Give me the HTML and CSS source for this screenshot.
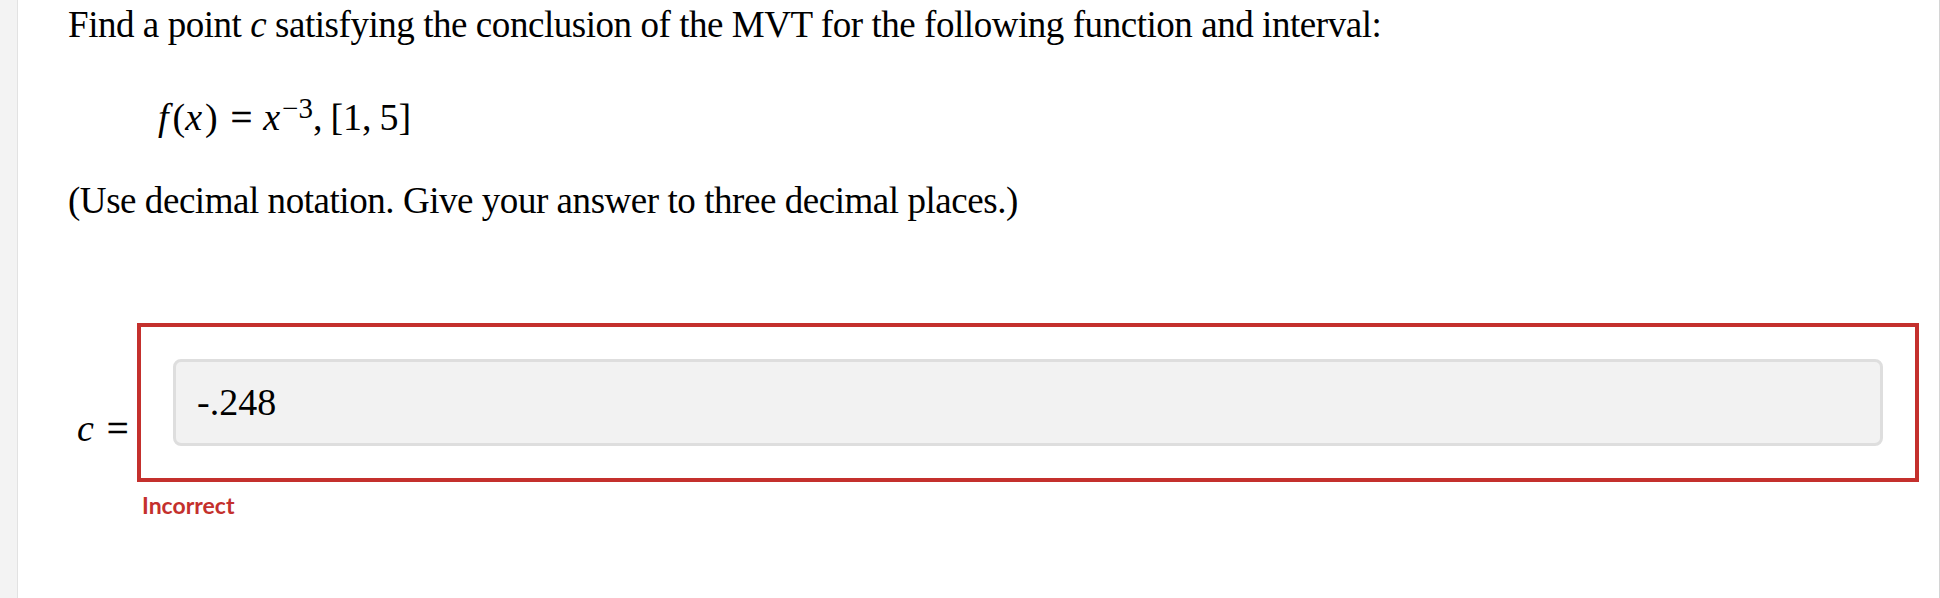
FILE: index.html
```html
<!DOCTYPE html>
<html lang="en">
<head>
<meta charset="utf-8">
<title>MVT question</title>
<link rel="stylesheet" href="styles.css">
</head>
<body>
<div class="page">
  <aside class="rail"></aside>
  <main class="content">
    <p class="prompt prose">Find a point <i class="mi">c</i> satisfying the conclusion of the MVT for the following function and interval:</p>
    <p class="math"><i class="mi mi-f">f</i>(<i class="mi mi-x">x</i>)<span class="mo">=</span><i class="mi">x</i><sup class="sup">−3</sup><span class="punct">,</span>[1<span class="punct">,</span>5]</p>
    <p class="note prose">(Use decimal notation. Give your answer to three decimal places.)</p>
    <div class="answer">
      <div class="label"><i class="mi">c</i><span class="mo mo-end">=</span></div>
      <div class="field">
        <div class="box">
          <div class="control">-.248</div>
        </div>
        <div class="feedback">Incorrect</div>
      </div>
    </div>
  </main>
</div>
</body>
</html>
```
FILE: styles.css
```css
html, body {
  margin: 0;
  padding: 0;
  background: #ffffff;
}

body {
  font-family: "Liberation Serif", "Times New Roman", serif;
  font-size: 38px;
  color: #000;
}

.page {
  display: flex;
  min-height: 598px;
}

.rail {
  width: 17px;
  flex: 0 0 17px;
  background: #f3f3f3;
  border-right: 1px solid #e2e2e2;
}

.content {
  flex: 1;
  padding: 0 20px 0 50px;
  border-right: 1px solid #d4d4d4;
}

p {
  margin: 0;
  line-height: 44px;
}

.prose {
  font-size: 37px;
  letter-spacing: -0.45px;
}

.prompt {
  margin-top: 3px;
}

.mi {
  font-style: italic;
}

.mi-f {
  margin-right: 4px;
}

.mi-x {
  margin-right: 3px;
}

.math {
  margin-top: 48px;
  padding-left: 90px;
}

.mo {
  padding: 0 11px 0 13px;
  -webkit-text-stroke: 0.6px #000;
}

.sup {
  font-size: 29px;
  vertical-align: 12px;
  line-height: 0;
  margin-left: 2px;
}

.punct {
  margin-right: 8px;
}

.note {
  margin-top: 40px;
}

.answer {
  display: flex;
  margin-top: 100px;
}

.label {
  width: 69px;
  flex: 0 0 69px;
  box-sizing: border-box;
  padding-left: 9px;
  align-self: flex-start;
  margin-top: 86px;
  line-height: 38px;
  white-space: nowrap;
}

.mo-end {
  padding-right: 0;
}

.field {
  flex: 1;
}

.box {
  border: 4px solid #c4302d;
  padding: 32px;
}

.control {
  height: 38px;
  padding: 21px 21px 22px;
  background: #f2f2f2;
  border: 3px solid #dedede;
  border-radius: 8px;
  line-height: 38px;
}

.feedback {
  margin-top: 11px;
  padding-left: 5px;
  font-family: Lato, "Open Sans", sans-serif;
  font-weight: 700;
  font-size: 23px;
  line-height: 24px;
  color: #c4302d;
}
```
